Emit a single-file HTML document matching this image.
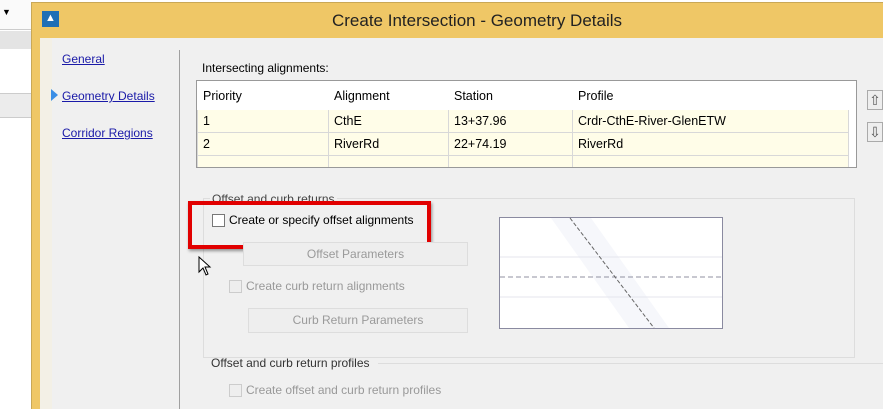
<!DOCTYPE html>
<html><head><style>
*{margin:0;padding:0;box-sizing:border-box}
html,body{width:883px;height:409px;overflow:hidden}
body{background:#fff;font-family:"Liberation Sans",sans-serif;font-size:12px;position:relative;color:#000}
.a{position:absolute}
.frame{left:31px;top:2px;width:852px;height:407px;background:#efc766;border-left:1px solid #c9a857;border-top:1px solid #c9a857}
.title{left:31px;top:3px;width:852px;height:35px;font-size:17px;color:#222;text-align:center;line-height:35px;padding-left:40px}
.content{left:40px;top:38px;width:843px;height:371px;background:#f0f0f0}
.nav a{position:absolute;color:#1a1aa8;text-decoration:underline;font-size:12px}
table{border-collapse:collapse;font-size:12.5px}
td{border:1px solid #d8d8d8;height:23px;padding-left:5px;background:#fffde8}
tr.h td{background:#fff;height:28px;border-color:#fff}
.cb{width:13px;height:13px;border:1px solid #777;background:#fff}
.cbd{border-color:#ccc;background:#eee}
.btn{border:1px solid #ddd;background:#eee;color:#9a9a9a;text-align:center;line-height:22px}
.dis{color:#999}
</style></head><body>
<div class="a" style="left:0;top:0;width:31px;height:30px;background:#fafafa;border-bottom:1px solid #ccc"></div>
<div class="a" style="left:2px;top:7px;font-size:9px">▼</div>
<div class="a" style="left:0;top:31px;width:31px;height:18px;background:#e4e4e4"></div>
<div class="a" style="left:0;top:93px;width:31px;height:25px;background:#ececec;border-top:1px solid #ccc;border-bottom:1px solid #ccc"></div>
<div class="a frame"></div>
<div class="a" style="left:42px;top:11px;width:17px;height:16px;background:#1f6fb5"></div>
<div class="a" style="left:45px;top:12px;color:#fff;font-size:11px;font-weight:bold">▲</div>
<div class="a title">Create Intersection - Geometry Details</div>
<div class="a content"></div>
<div class="a" style="left:40px;top:38px;width:12px;height:371px;background:#f3f0e6"></div>
<div class="a" style="left:179px;top:50px;width:1px;height:359px;background:#a0a0a0"></div>
<div class="nav">
<a style="left:62px;top:52px">General</a>
<a style="left:62px;top:89px">Geometry Details</a>
<a style="left:62px;top:126px">Corridor Regions</a>
</div>
<div class="a" style="left:51px;top:89px;width:0;height:0;border-top:6px solid transparent;border-bottom:6px solid transparent;border-left:7px solid #3a8ee6"></div>
<div class="a" style="left:202px;top:61px;font-size:12px">Intersecting alignments:</div>
<div class="a" style="left:196px;top:80px;width:661px;height:88px;border:1px solid #999;background:#fff;overflow:hidden">
<table style="width:652px">
<tr class="h"><td style="width:131px">Priority</td><td style="width:120px">Alignment</td><td style="width:124px">Station</td><td>Profile</td></tr>
<tr><td>1</td><td>CthE</td><td>13+37.96</td><td>Crdr-CthE-River-GlenETW</td></tr>
<tr><td>2</td><td>RiverRd</td><td>22+74.19</td><td>RiverRd</td></tr>
<tr><td style="height:11px"></td><td></td><td></td><td></td></tr>
</table></div>
<div class="a" style="left:867px;top:90px;width:16px;height:20px;border:1px solid #aaa;background:#eee;font-size:14px;line-height:18px;text-align:center;color:#555">⇧</div>
<div class="a" style="left:867px;top:122px;width:16px;height:20px;border:1px solid #aaa;background:#eee;font-size:14px;line-height:18px;text-align:center;color:#555">⇩</div>
<div class="a" style="left:203px;top:198px;width:652px;height:160px;border:1px solid #ddd"></div>
<div class="a" style="left:210px;top:192px;font-size:12px;background:#f0f0f0;padding:0 2px;color:#444">Offset and curb returns</div>
<div class="a cb" style="left:212px;top:214px"></div>
<div class="a" style="left:229px;top:213px;font-size:12px">Create or specify offset alignments</div>
<div class="a" style="left:188px;top:201px;width:243px;height:48px;border:4px solid #e10000;box-shadow:1px 2px 3px rgba(0,0,0,.4)"></div>
<div class="a btn" style="left:243px;top:242px;width:225px;height:24px">Offset Parameters</div>
<div class="a cb cbd" style="left:229px;top:280px"></div>
<div class="a dis" style="left:246px;top:279px">Create curb return alignments</div>
<div class="a btn" style="left:248px;top:308px;width:220px;height:25px">Curb Return Parameters</div>
<svg class="a" style="left:499px;top:217px" width="224" height="112">
<rect x="0.5" y="0.5" width="223" height="111" fill="#fff" stroke="#8a8aa0"/>
<polygon points="52,1 92,1 170,111 130,111" fill="#f6f7fb"/>
<line x1="1" y1="40" x2="223" y2="40" stroke="#e4e6ee"/>
<line x1="1" y1="80" x2="223" y2="80" stroke="#e4e6ee"/>
<line x1="1" y1="60" x2="223" y2="60" stroke="#9090a0" stroke-dasharray="5,3"/>
<line x1="71" y1="1" x2="155" y2="111" stroke="#666" stroke-dasharray="4,2"/>
</svg>
<div class="a" style="left:211px;top:356px;font-size:12px;color:#333">Offset and curb return profiles</div>
<div class="a" style="left:378px;top:363px;width:505px;height:1px;background:#ddd"></div>
<div class="a cb cbd" style="left:229px;top:384px"></div>
<div class="a dis" style="left:246px;top:383px">Create offset and curb return profiles</div>
<svg class="a" style="left:198px;top:256px" width="16" height="22"><path d="M1 1 L1 16 L5 12 L8 19 L10 18 L7 11 L12 11 Z" fill="#fff" stroke="#000"/></svg>
</body></html>
